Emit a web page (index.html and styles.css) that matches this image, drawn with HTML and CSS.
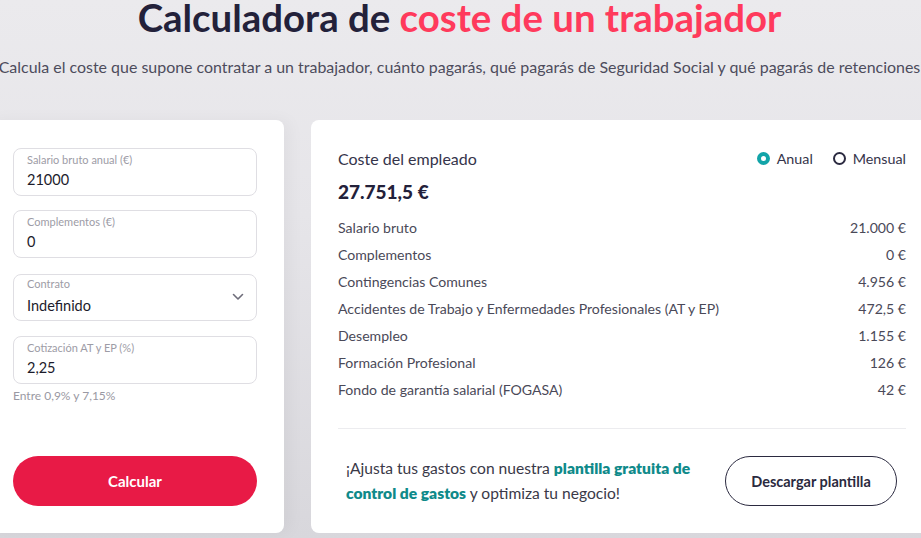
FILE: index.html
```html
<!DOCTYPE html>
<html lang="es">
<head>
<meta charset="utf-8">
<title>Calculadora de coste de un trabajador</title>
<link rel="stylesheet" href="styles.css">
</head>
<body>
<main class="page">
  <header class="hero">
    <h1 class="title">Calculadora de <span class="accent">coste de un trabajador</span></h1>
    <p class="subtitle">Calcula el coste que supone contratar a un trabajador, cuánto pagarás, qué pagarás de Seguridad Social y qué pagarás de retenciones</p>
  </header>
  <section class="cards">
    <form class="card form-card">
      <div class="fields">
        <label class="field">
          <span class="field-label">Salario bruto anual (€)</span>
          <span class="field-value">21000</span>
        </label>
        <label class="field">
          <span class="field-label">Complementos (€)</span>
          <span class="field-value">0</span>
        </label>
        <label class="field field-select">
          <span class="field-text">
            <span class="field-label">Contrato</span>
            <span class="field-value">Indefinido</span>
          </span>
          <svg class="chevron" width="12" height="8" viewBox="0 0 12 8"><path d="M1.5 1.5 L6 6 L10.5 1.5" fill="none" stroke="#6e6d7a" stroke-width="1.6" stroke-linecap="round" stroke-linejoin="round"/></svg>
        </label>
        <div class="field-group">
          <label class="field">
            <span class="field-label">Cotización AT y EP (%)</span>
            <span class="field-value">2,25</span>
          </label>
          <span class="help">Entre 0,9% y 7,15%</span>
        </div>
      </div>
      <button type="button" class="btn-primary">Calcular</button>
    </form>
    <article class="card result-card">
      <div class="result-head">
        <span class="result-title">Coste del empleado</span>
        <div class="radios">
          <span class="radio"><span class="dot dot-on"></span>Anual</span>
          <span class="radio"><span class="dot"></span>Mensual</span>
        </div>
      </div>
      <div class="total">27.751,5 €</div>
      <ul class="rows">
        <li class="row"><span>Salario bruto</span><span>21.000 €</span></li>
        <li class="row"><span>Complementos</span><span>0 €</span></li>
        <li class="row"><span>Contingencias Comunes</span><span>4.956 €</span></li>
        <li class="row"><span>Accidentes de Trabajo y Enfermedades Profesionales (AT y EP)</span><span>472,5 €</span></li>
        <li class="row"><span>Desempleo</span><span>1.155 €</span></li>
        <li class="row"><span>Formación Profesional</span><span>126 €</span></li>
        <li class="row"><span>Fondo de garantía salarial (FOGASA)</span><span>42 €</span></li>
      </ul>
      <div class="cta">
        <p class="cta-text">¡Ajusta tus gastos con nuestra <strong>plantilla gratuita de</strong><br><strong>control de gastos</strong> y optimiza tu negocio!</p>
        <button type="button" class="btn-outline">Descargar plantilla</button>
      </div>
    </article>
  </section>
</main>
</body>
</html>
```

FILE: styles.css
```css
* { box-sizing: border-box; }
html, body { margin: 0; padding: 0; }
body {
  width: 921px;
  height: 538px;
  overflow: hidden;
  font-family: Lato, "Open Sans", sans-serif;
  background: linear-gradient(180deg, #ebeaed 0%, #e6e5e9 40%, #d8d7dc 100%);
  color: #3a3948;
}
.page {
  width: 947px;
  margin-left: -14px;
}
.hero {
  display: flex;
  flex-direction: column;
  align-items: center;
}
.title {
  margin: -7px 0 0;
  font-size: 38.4px;
  line-height: 48px;
  font-weight: 700;
  color: #23213a;
  white-space: nowrap;
}
.accent { color: #ff3a5c; }
.subtitle {
  margin: 15px 0 0;
  font-size: 15.95px;
  line-height: 22px;
  color: #4d4c5c;
  white-space: nowrap;
}
.cards {
  display: flex;
  gap: 27px;
  margin-top: 42px;
}
.card {
  background: #fff;
  border-radius: 8px;
  height: 413px;
}
.form-card {
  width: 298px;
  margin: 0;
  padding: 28px 27px 27px;
  display: flex;
  flex-direction: column;
  justify-content: space-between;
  box-shadow: 6px 0 16px rgba(0,0,0,0.04);
}
.fields {
  display: flex;
  flex-direction: column;
  gap: 14px;
}
.field {
  display: flex;
  flex-direction: column;
  border: 1px solid #dfdee3;
  border-radius: 8px;
  height: 48px;
  padding: 3px 13px 0;
}
.field-select {
  flex-direction: row;
  align-items: center;
  justify-content: space-between;
  height: 47px;
  margin-top: 2px;
  padding-right: 12px;
}
.field-text { display: flex; flex-direction: column; }
.field-select .field-text { margin-top: -5px; }
.field-label {
  font-size: 11px;
  line-height: 15px;
  color: #9d9ca6;
}
.field-value {
  font-size: 14.5px;
  line-height: 22px;
  color: #1c1b2b;
  margin-top: 2px;
}
.field-select .field-value { margin-top: 4px; }
.chevron { margin-top: -4px; }
.field-group { display: flex; flex-direction: column; gap: 4px; margin-top: 1px; }
.help {
  font-size: 12px;
  line-height: 15px;
  color: #9a99a3;
}
.btn-primary {
  height: 50px;
  border: none;
  border-radius: 25px;
  background: #e81a46;
  color: #fff;
  font-family: inherit;
  font-size: 15px;
  font-weight: 700;
}
.result-card {
  width: 622px;
  padding: 28px 27px 27px;
  display: flex;
  flex-direction: column;
}
.result-head {
  display: flex;
  justify-content: space-between;
  align-items: center;
  height: 21px;
}
.result-title {
  font-size: 16px;
  color: #35344a;
}
.radios { display: flex; gap: 20px; }
.radio {
  display: flex;
  align-items: center;
  gap: 7px;
  font-size: 14.3px;
  color: #35344a;
}
.dot {
  width: 13px;
  height: 13px;
  border-radius: 50%;
  border: 2px solid #2b2a40;
}
.dot-on {
  border: 4px solid #12a4a8;
  background: #fff;
}
.total {
  margin-top: 8px;
  font-size: 19px;
  line-height: 30px;
  font-weight: 900;
  color: #23213a;
}
.rows {
  list-style: none;
  margin: 7px 0 0;
  padding: 0;
  display: flex;
  flex-direction: column;
}
.row {
  display: flex;
  justify-content: space-between;
  font-size: 14.1px;
  line-height: 27px;
  color: #4a4958;
}
.cta {
  margin-top: 25px;
  border-top: 1px solid #ececef;
  padding: 27px 9px 0 8px;
  display: flex;
  justify-content: space-between;
  align-items: center;
}
.cta-text {
  margin: 0;
  font-size: 15.6px;
  line-height: 25px;
  color: #3a3948;
  white-space: nowrap;
}
.cta-text strong { color: #0f8a8a; font-weight: 800; }
.btn-outline {
  width: 172px;
  height: 50px;
  border: 1.5px solid #2b2a40;
  border-radius: 25px;
  background: #fff;
  color: #2b2a40;
  font-family: inherit;
  font-size: 14.5px;
  font-weight: 700;
}
```
